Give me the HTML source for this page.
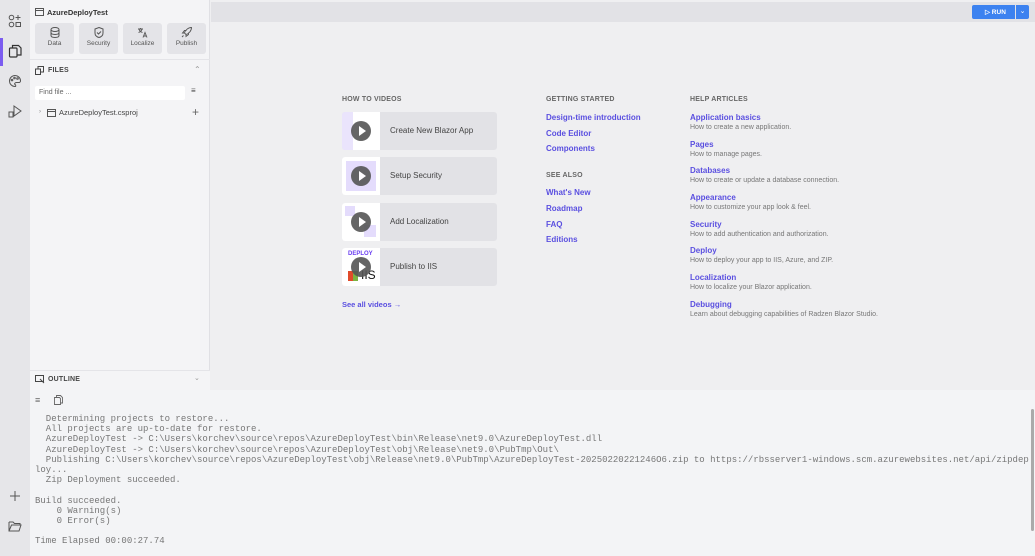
<!DOCTYPE html>
<html><head><meta charset="utf-8"><style>
*{box-sizing:border-box;margin:0;padding:0}
body{width:1035px;height:556px;overflow:hidden;background:#efeff1;font-family:"Liberation Sans",sans-serif;position:relative;color:#3a3a40}
.abs{position:absolute}
#rail{left:0;top:0;width:30px;height:556px;background:#e6e6e9}
#side{left:30px;top:0;width:180px;height:390px;background:#f4f4f6;border-right:1px solid #e0e0e4}
#top{left:211px;top:2px;width:824px;height:20px;background:#e2e2e6}
.tile{position:absolute;top:23px;width:39px;height:31px;background:#e4e4e8;border-radius:3px;font-size:6.5px;color:#555;text-align:center}
.tile svg{display:block;margin:4px auto 2px}
.h{font-size:7px;font-weight:bold;color:#666;letter-spacing:.2px}
.lnk{color:#5a4fe0;font-size:8px;font-weight:bold}
.sub{color:#777;font-size:7px}
.card{position:absolute;left:342px;width:155px;height:38px;background:#e2e2e6;border-radius:3px;overflow:hidden}
.card .th{position:absolute;left:0;top:0;width:38px;height:38px;background:#fff}
.card .pl{position:absolute;left:9px;top:9px;width:20px;height:20px;border-radius:50%;background:#555;opacity:.9}
.card .pl:after{content:"";position:absolute;left:8px;top:5px;border-left:7px solid #fff;border-top:5px solid transparent;border-bottom:5px solid transparent}
.card span{position:absolute;left:48px;top:14px;font-size:8px;color:#444}
#con{left:30px;top:390px;width:1005px;height:166px;background:#f3f4f6}
pre{font-family:"Liberation Mono",monospace;font-size:9px;line-height:10.2px;color:#777}
</style></head><body>
<div class="abs" id="rail"></div>
<div class="abs" style="left:0;top:38px;width:3px;height:28px;background:#7b5cf0"></div>
<svg class="abs" style="left:8px;top:14px" width="14" height="14" fill="none" stroke="#555" stroke-width="1"><circle cx="3.5" cy="3.5" r="2.3"/><path d="M10 1v5M7.5 3.5h5"/><circle cx="3.5" cy="10.5" r="2.3"/><rect x="8" y="8.5" width="4.5" height="4"/></svg>
<svg class="abs" style="left:8px;top:44px" width="14" height="14" fill="none" stroke="#333" stroke-width="1.2"><rect x="1.5" y="4" width="7.5" height="9" rx="1"/><path d="M4.5 4V1.5h6l2.5 2.5v7h-4"/></svg>
<svg class="abs" style="left:8px;top:74px" width="14" height="14" fill="none" stroke="#555" stroke-width="1"><path d="M7 1.5a5.5 5.5 0 1 0 0 11c1 0 1-1.5 0-2s0-2 1.5-2h3a2 2 0 0 0 1-2A5.5 5.5 0 0 0 7 1.5z"/><circle cx="4" cy="6" r=".8"/><circle cx="6.5" cy="4" r=".8"/><circle cx="9.5" cy="4.5" r=".8"/></svg>
<svg class="abs" style="left:8px;top:104px" width="14" height="14" fill="none" stroke="#555" stroke-width="1"><path d="M6 2l7 5-7 5z"/><rect x="1" y="8" width="4" height="5"/></svg>
<svg class="abs" style="left:9px;top:490px" width="12" height="12" stroke="#555" stroke-width="1"><path d="M6 1v10M1 6h10"/></svg>
<svg class="abs" style="left:8px;top:520px" width="14" height="12" fill="none" stroke="#555" stroke-width="1"><path d="M1 2h4l1.5 1.5H12v2M1 2v9h10l2-6H3.5L1 11"/></svg>

<div class="abs" id="side">
 <svg class="abs" style="left:5px;top:8px" width="9" height="8" fill="none" stroke="#555"><rect x=".5" y=".5" width="8" height="7"/><path d="M.5 2.5h8"/></svg>
 <div class="abs" style="left:17px;top:8px;font-size:7.5px;font-weight:bold;color:#333">AzureDeployTest</div>
 <div class="tile" style="left:5px"><svg width="10" height="11" fill="none" stroke="#555"><ellipse cx="5" cy="2.5" rx="4" ry="2"/><path d="M1 2.5v6c0 2.6 8 2.6 8 0v-6M1 5.5c0 2.6 8 2.6 8 0"/></svg>Data</div>
 <div class="tile" style="left:49px"><svg width="10" height="11" fill="none" stroke="#555"><path d="M5 .5L9 2v4c0 2.5-2 4-4 4.5C3 10 1 8.5 1 6V2z"/><path d="M3 5.5l1.5 1.5L7 4.5"/></svg>Security</div>
 <div class="tile" style="left:93px"><svg width="11" height="11" fill="none" stroke="#555" stroke-width=".9"><path d="M1 2h5M3.5 1v1M2 2c.5 2 2 3 3.5 3.5M5 2c-.5 2-2 3-3.5 3.5M6 10.5l2-5 2 5M6.8 9h2.4"/></svg>Localize</div>
 <div class="tile" style="left:137px"><svg width="11" height="11" fill="none" stroke="#555" stroke-width=".9"><path d="M10.5.5C7 .5 4 3.5 3.5 6l1.5 1.5C7.5 7 10.5 4 10.5.5zM3.5 6H1.5l2-2.5h2M5 7.5v2l2.5-2v-2M2.5 8.5L1 10"/></svg>Publish</div>
 <div class="abs" style="left:0;top:59px;width:180px;border-top:1px solid #e4e4e8"></div>
 <svg class="abs" style="left:5px;top:66px" width="9" height="9" fill="none" stroke="#444"><rect x=".5" y="3" width="5" height="5.5"/><path d="M3 3V.5h5.5v5.5H5.5"/></svg>
 <div class="abs h" style="left:18px;top:67px;color:#444">FILES</div>
 <div class="abs" style="left:164px;top:65px;font-size:8px;color:#999">&#8963;</div>
 <div class="abs" style="left:5px;top:86px;width:150px;height:14px;background:#fff;border-radius:2px;font-size:7px;color:#666;padding:3px 4px">Find file ...</div>
 <div class="abs" style="left:161px;top:86px;font-size:8px;color:#444">&#8801;</div>
 <div class="abs" style="left:9px;top:109px;font-size:6px;color:#888">&#8250;</div>
 <svg class="abs" style="left:17px;top:109px" width="9" height="8" fill="none" stroke="#555"><rect x=".5" y=".5" width="8" height="7"/><path d="M.5 2.5h8"/></svg>
 <div class="abs" style="left:29px;top:108px;font-size:7.5px;color:#444">AzureDeployTest.csproj</div>
 <div class="abs" style="left:162px;top:105px;font-size:12px;color:#666">+</div>
 <div class="abs" style="left:0;top:370px;width:180px;height:20px;border-top:1px solid #e4e4e8;background:#f4f4f6"></div>
 <svg class="abs" style="left:5px;top:375px" width="10" height="9" fill="none" stroke="#444"><rect x=".5" y=".5" width="8" height="6"/><path d="M5 4l4 4"/></svg>
 <div class="abs h" style="left:18px;top:376px;color:#444">OUTLINE</div>
 <div class="abs" style="left:164px;top:374px;font-size:7px;color:#999">&#8964;</div>
</div>

<div class="abs" id="top"></div>
<div class="abs" style="left:972px;top:5px;width:43px;height:14px;background:#3c82f0;border-radius:2px 0 0 2px;color:#fff;font-size:6.5px;font-weight:bold;padding:3px 0 0 13px">&#9655; RUN</div>
<div class="abs" style="left:1016px;top:5px;width:13px;height:14px;background:#3c82f0;border-radius:0 2px 2px 0;color:#fff;font-size:7px;text-align:center;padding-top:2px">&#8964;</div>

<div class="abs h" style="left:342px;top:96px">HOW TO VIDEOS</div>
<div class="card" style="top:112px"><div class="th" style="background:linear-gradient(90deg,#eae4fc 0 11px,#fff 11px)"></div><div class="pl"></div><span>Create New Blazor App</span></div>
<div class="card" style="top:157px"><div class="th"><div style="position:absolute;left:4px;top:4px;width:30px;height:30px;background:#e4dcfc"></div></div><div class="pl"></div><span>Setup Security</span></div>
<div class="card" style="top:203px"><div class="th"><div style="position:absolute;left:3px;top:3px;width:10px;height:10px;background:#e4dcfc"></div><div style="position:absolute;left:22px;top:22px;width:12px;height:12px;background:#e4dcfc"></div></div><div class="pl"></div><span>Add Localization</span></div>
<div class="card" style="top:248px"><div class="th"><div style="position:absolute;left:6px;top:3px;font-size:6px;font-weight:bold;color:#6a3df0">DEPLOY</div><div style="position:absolute;left:6px;top:23px;width:10px;height:10px;background:linear-gradient(90deg,#e04a2a 50%,#7cb342 50%)"></div><div style="position:absolute;left:19px;top:20px;font-size:12px;color:#111">IIS</div></div><div class="pl"></div><span>Publish to IIS</span></div>
<div class="abs lnk" style="left:342px;top:300px;font-size:7.5px">See all videos &#8594;</div>

<div class="abs h" style="left:546px;top:96px">GETTING STARTED</div>
<div class="abs lnk" style="left:546px;top:113px">Design-time introduction</div>
<div class="abs lnk" style="left:546px;top:129px">Code Editor</div>
<div class="abs lnk" style="left:546px;top:144px">Components</div>
<div class="abs h" style="left:546px;top:172px">SEE ALSO</div>
<div class="abs lnk" style="left:546px;top:188px">What's New</div>
<div class="abs lnk" style="left:546px;top:204px">Roadmap</div>
<div class="abs lnk" style="left:546px;top:220px">FAQ</div>
<div class="abs lnk" style="left:546px;top:235px">Editions</div>

<div class="abs h" style="left:690px;top:96px">HELP ARTICLES</div>
<div class="abs" style="left:690px;top:113px;line-height:10px">
<div class="lnk">Application basics</div><div class="sub" style="margin-bottom:6.7px">How to create a new application.</div>
<div class="lnk">Pages</div><div class="sub" style="margin-bottom:6.7px">How to manage pages.</div>
<div class="lnk">Databases</div><div class="sub" style="margin-bottom:6.7px">How to create or update a database connection.</div>
<div class="lnk">Appearance</div><div class="sub" style="margin-bottom:6.7px">How to customize your app look &amp; feel.</div>
<div class="lnk">Security</div><div class="sub" style="margin-bottom:6.7px">How to add authentication and authorization.</div>
<div class="lnk">Deploy</div><div class="sub" style="margin-bottom:6.7px">How to deploy your app to IIS, Azure, and ZIP.</div>
<div class="lnk">Localization</div><div class="sub" style="margin-bottom:6.7px">How to localize your Blazor application.</div>
<div class="lnk">Debugging</div><div class="sub">Learn about debugging capabilities of Radzen Blazor Studio.</div>
</div>

<div class="abs" id="con">
<div class="abs" style="left:5px;top:5px;font-size:9px;color:#666">&#8801;</div>
<svg class="abs" style="left:24px;top:5px" width="9" height="10" fill="none" stroke="#666" stroke-width=".9"><path d="M2.5 2.5V.5h4l2 2v5.5h-2M.5 2.5h5l1 1v6h-6z"/></svg>
<pre class="abs" style="left:5px;top:24px">  Determining projects to restore...
  All projects are up-to-date for restore.
  AzureDeployTest -&gt; C:\Users\korchev\source\repos\AzureDeployTest\bin\Release\net9.0\AzureDeployTest.dll
  AzureDeployTest -&gt; C:\Users\korchev\source\repos\AzureDeployTest\obj\Release\net9.0\PubTmp\Out\
  Publishing C:\Users\korchev\source\repos\AzureDeployTest\obj\Release\net9.0\PubTmp\AzureDeployTest-20250220221246O6.zip to https://rbsserver1-windows.scm.azurewebsites.net/api/zipdep
loy...
  Zip Deployment succeeded.

Build succeeded.
    0 Warning(s)
    0 Error(s)

Time Elapsed 00:00:27.74</pre>
<div class="abs" style="left:1001px;top:19px;width:3px;height:122px;background:#aaa;border-radius:2px"></div>
</div>
</body></html>
